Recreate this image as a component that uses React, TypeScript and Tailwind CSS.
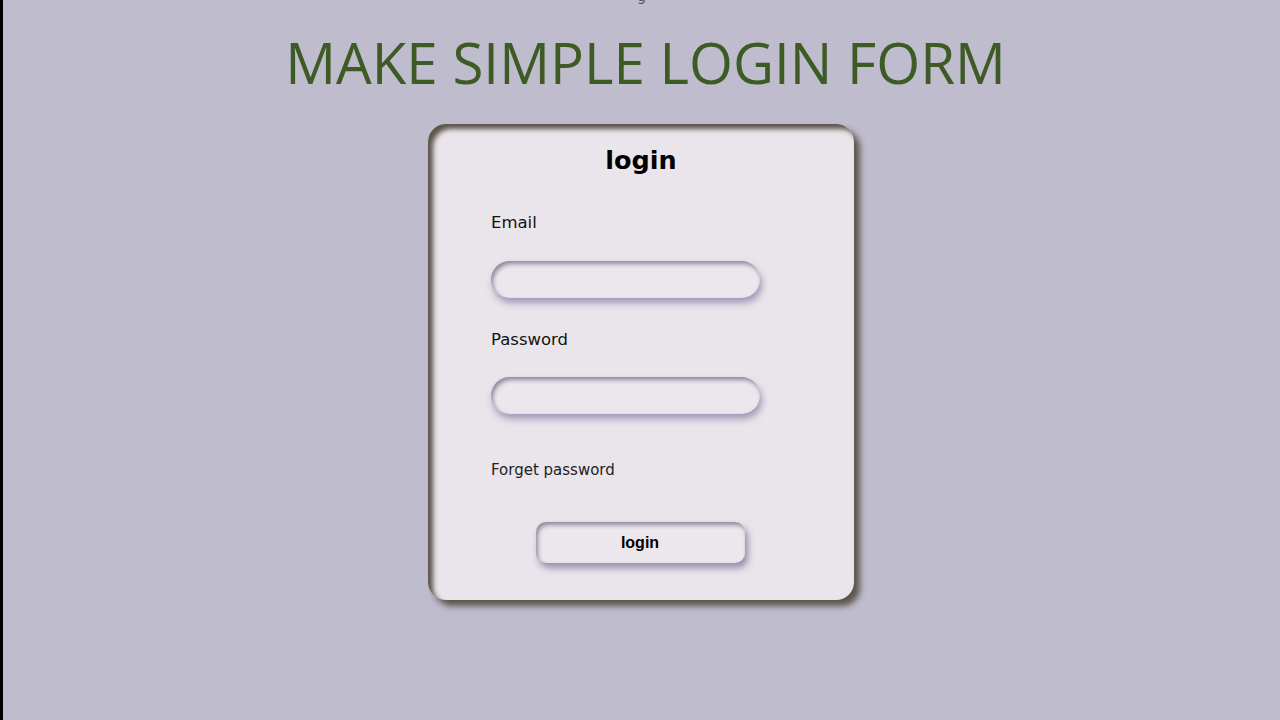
import React from 'react';

const inputShadow =
  'shadow-[inset_2px_3px_4px_rgba(80,76,110,0.6),2px_5px_7px_rgba(110,105,150,0.6)]';

export default function App() {
  return (
    <div className="relative h-screen w-full overflow-hidden bg-[#bfbccd] border-l-[3px] border-black [font-family:'DejaVu_Sans',sans-serif]">
      {/* clipped caption remnant at the very top */}
      <div className="absolute left-[634px] top-[-14px] text-[14px] text-[#555]">g</div>

      <h1 className="pt-[33px] pl-[8px] text-center text-[56.5px] leading-[60px] text-[#3e5b26] [font-family:'Open_Sans',sans-serif]">
        MAKE SIMPLE LOGIN FORM
      </h1>

      <div className="mt-[31px] ml-[425px] flex h-[476px] w-[426px] flex-col rounded-[18px] bg-[#e9e5ea] px-[63px] shadow-[inset_5px_5px_5px_#5c544c,6px_6px_6px_#5c544c]">
        <h2 className="mt-[21px] text-center text-[25.5px] font-bold leading-[30px] text-black">login</h2>

        <label className="mt-[38px] text-[16.5px] leading-[20px] text-[#111]">Email</label>
        <input
          type="email"
          className={`mt-[28px] h-[37px] w-[269px] rounded-full bg-[#ebe7ec] outline-none ${inputShadow}`}
        />

        <label className="mt-[32px] text-[16.5px] leading-[20px] text-[#111]">Password</label>
        <input
          type="password"
          className={`mt-[27px] h-[37px] w-[269px] rounded-full bg-[#ebe7ec] outline-none ${inputShadow}`}
        />

        <a className="mt-[47px] text-[15px] leading-[18px] text-[#222]">Forget password</a>

        <button className="mx-auto mt-[43px] h-[41px] w-[209px] translate-x-[-1px] rounded-[10px] bg-[#ebe7ec] text-[16px] font-bold text-black [font-family:'Liberation_Sans',sans-serif] shadow-[inset_2px_3px_4px_rgba(80,76,110,0.6),3px_5px_7px_rgba(110,105,150,0.7)]">
          login
        </button>
      </div>
    </div>
  );
}
